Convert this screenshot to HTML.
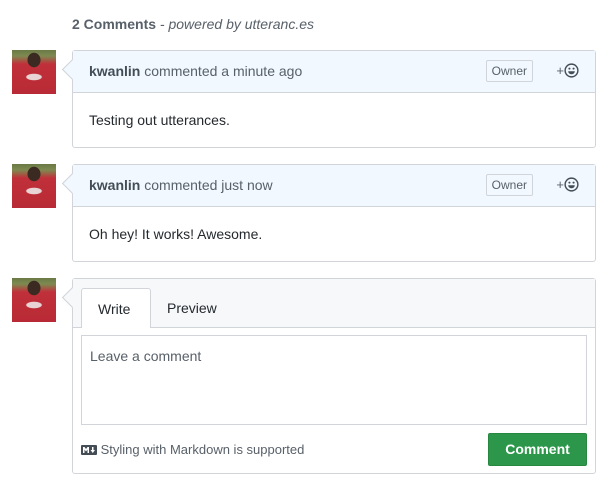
<!DOCTYPE html>
<html><head><style>
body{margin:0;background:#fff;font-family:"Liberation Sans",sans-serif;font-size:14px;color:#24292e;width:609px;height:493px;overflow:hidden;position:relative}
.hd{position:absolute;left:72px;top:16px;color:#586069;font-weight:bold}
.hd i{font-weight:normal}
.av{position:absolute;left:12px;width:44px;height:44px;background:
radial-gradient(ellipse 9px 10px at 22px 10px,#3a2a22 70%,transparent 75%),
radial-gradient(ellipse 12px 5px at 22px 27px,#e8d4d4 60%,transparent 70%),
linear-gradient(180deg,#6a7a45 0,#7e8a50 6px,#c0303a 14px,#b82a35 100%)}
.box{position:absolute;left:72px;width:522px;border:1px solid #d1d5da;border-radius:3px;background:#fff}
.box:before{content:"";position:absolute;left:-8px;top:11px;width:14px;height:14px;background:#f1f8ff;border-left:1px solid #d1d5da;border-bottom:1px solid #d1d5da;transform:rotate(45deg);}
.ch{height:41px;background:#f1f8ff;border-bottom:1px solid #d1d5da;position:relative;line-height:41px;padding-left:16px;color:#586069}
.ch b{color:#444d56}
.own{position:absolute;right:62px;top:9px;height:20px;line-height:20px;border:1px solid #d1d5da;padding:0 5px;font-size:12px;color:#586069;border-radius:2px}
.emo{position:absolute;right:16px;top:12px;font-size:13px;color:#586069;line-height:16px}
.emo svg{vertical-align:-3px}
.cb{padding:0 16px;height:54px;line-height:54px}
.form{top:278px;height:194px;background:#fff}
.form:before{background:#f6f8fa}
.tabs{height:48px;background:#f6f8fa;border-bottom:1px solid #d1d5da;position:relative}
.tab{position:absolute;top:9px;height:39px;line-height:40px;padding:0 16px}
.w{left:8px;background:#fff;border:1px solid #d1d5da;border-bottom:none;border-radius:3px 3px 0 0;height:39px;width:36px}
.ta{position:absolute;left:8px;top:56px;width:504px;height:88px;border:1px solid #d1d5da;color:#586069;padding:0}
.ta div{position:absolute;left:8px;top:12px}
.ft{position:absolute;left:8px;top:163px;font-size:13px;color:#586069}
.btn{position:absolute;left:415px;top:154px;width:97px;height:31px;background:#2c974b;border:1px solid #28873f;border-radius:2px;color:#fff;font-weight:bold;text-align:center;line-height:31px}
</style></head><body>
<div class="hd">2 Comments <i>- powered by utteranc.es</i></div>
<div class="av" style="top:50px"></div>
<div class="box" style="top:50px"><div class="ch"><b>kwanlin</b> commented a minute ago<div class="own">Owner</div><div class="emo">+<svg width="15" height="15" viewBox="0 0 16 16"><circle cx="8" cy="8" r="6.8" fill="none" stroke="#444d56" stroke-width="1.5"/><circle cx="5.8" cy="6" r="1.1" fill="#444d56"/><circle cx="10.2" cy="6" r="1.1" fill="#444d56"/><path d="M4.5 8.8h7c0 2-1.6 3.2-3.5 3.2S4.5 10.8 4.5 8.8z" fill="#444d56"/></svg></div></div><div class="cb">Testing out utterances.</div></div>
<div class="av" style="top:164px"></div>
<div class="box" style="top:164px"><div class="ch"><b>kwanlin</b> commented just now<div class="own">Owner</div><div class="emo">+<svg width="15" height="15" viewBox="0 0 16 16"><circle cx="8" cy="8" r="6.8" fill="none" stroke="#444d56" stroke-width="1.5"/><circle cx="5.8" cy="6" r="1.1" fill="#444d56"/><circle cx="10.2" cy="6" r="1.1" fill="#444d56"/><path d="M4.5 8.8h7c0 2-1.6 3.2-3.5 3.2S4.5 10.8 4.5 8.8z" fill="#444d56"/></svg></div></div><div class="cb">Oh hey! It works! Awesome.</div></div>
<div class="av" style="top:278px"></div>
<div class="box form"><div class="tabs"><div class="tab w">Write</div><div class="tab" style="left:78px">Preview</div></div>
<div class="ta"><div>Leave a comment</div></div>
<div class="ft"><svg width="16" height="10" viewBox="0 0 16 10" style="vertical-align:-1px"><rect width="16" height="10" rx="1" fill="#444d56"/><path d="M2 8V2h1.5l1.5 2 1.5-2H8v6H6.5V4.5L5 6.5 3.5 4.5V8z M11 2h1.5v3H14l-2.25 3L9.5 5H11z" fill="#fff"/></svg> Styling with Markdown is supported</div>
<div class="btn">Comment</div></div>
</body></html>
